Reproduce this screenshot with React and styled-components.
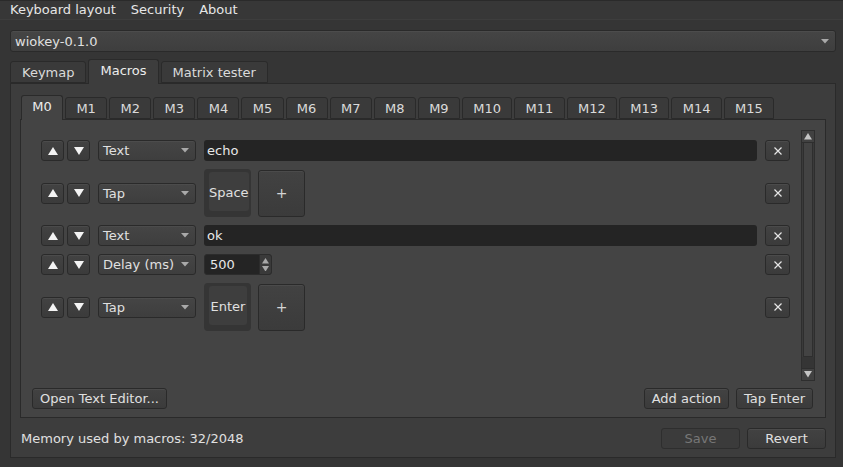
import React from "react"
import styled, { createGlobalStyle } from "styled-components"

const GlobalStyle = createGlobalStyle`
  html, body {
    margin: 0;
    padding: 0;
    background: #353535;
  }

  body {
    font-family: "DejaVu Sans", "Liberation Sans", sans-serif;
    font-size: 13px;
    color: #e0e0e0;
  }

  * {
    box-sizing: border-box;
  }
`

const macros = Array.from({ length: 16 }, (_, i) => `M${i}`)

const actions = [
  { kind: "Text", value: "echo" },
  { kind: "Tap", key: "Space" },
  { kind: "Text", value: "ok" },
  { kind: "Delay (ms)", delay: 500 },
  { kind: "Tap", key: "Enter" },
]

function Triangle({ up, size = 10, color = "#f4f4f4" }) {
  const h = size * 0.8
  return (
    <svg width={size} height={h} viewBox={`0 0 ${size} ${h}`}>
      <polygon
        points={up ? `0,${h} ${size / 2},0 ${size},${h}` : `0,0 ${size},0 ${size / 2},${h}`}
        fill={color}
      />
    </svg>
  )
}

function DropArrow() {
  return (
    <svg width="8" height="5" viewBox="0 0 8 5">
      <polygon points="0,0 8,0 4,4.5" fill="#a9a9a9" />
    </svg>
  )
}

function CloseIcon() {
  return (
    <svg width="8" height="8" viewBox="0 0 8 8">
      <path d="M0.5 0.5 L7.5 7.5 M7.5 0.5 L0.5 7.5" stroke="#e6e6e6" strokeWidth="1.2" />
    </svg>
  )
}

function ActionRow({ action }) {
  return (
    <Row>
      <ArrowButton><Triangle up /></ArrowButton>
      <ArrowButton><Triangle /></ArrowButton>
      <Combo $width={98} $gap={7}>
        <span>{action.kind}</span>
        <DropArrow />
      </Combo>
      {action.value !== undefined && <Field>{action.value}</Field>}
      {action.key && (
        <>
          <KeyCap>
            <KeyFace>{action.key}</KeyFace>
          </KeyCap>
          <PlusButton>+</PlusButton>
          <Spacer />
        </>
      )}
      {action.delay !== undefined && (
        <>
          <SpinBox>
            <span>{action.delay}</span>
            <SpinArrows>
              <Triangle up size={7} color="#a8a8a8" />
              <Triangle size={7} color="#a8a8a8" />
            </SpinArrows>
          </SpinBox>
          <Spacer />
        </>
      )}
      <CloseButton><CloseIcon /></CloseButton>
    </Row>
  )
}

export default function App() {
  return (
    <Window>
      <GlobalStyle />
      <MenuBar>
        <span>Keyboard layout</span>
        <span>Security</span>
        <span>About</span>
      </MenuBar>
      <Body>
        <Combo $gap={0}>
          <span>wiokey-0.1.0</span>
          <DropArrow />
        </Combo>
        <TabBar>
          <Tab $pad={11}>Keymap</Tab>
          <Tab $pad={11} $active $bg="#3d3d3d">Macros</Tab>
          <Tab $pad={11}>Matrix tester</Tab>
        </TabBar>
        <Pane>
          <TabBar $inner>
            {macros.map((m, i) => (
              <Tab key={m} $pad={10.3} $active={i === 0} $bg="#444444">{m}</Tab>
            ))}
          </TabBar>
          <InnerPane>
            <ScrollArea>
              <Actions>
                {actions.map((a, i) => (
                  <ActionRow key={i} action={a} />
                ))}
              </Actions>
              <ScrollBar>
                <ScrollStep><Triangle up size={8} color="#c4c4c4" /></ScrollStep>
                <ScrollHandle />
                <ScrollTrack />
                <ScrollStep><Triangle size={8} color="#c4c4c4" /></ScrollStep>
              </ScrollBar>
            </ScrollArea>
            <ButtonRow>
              <Button>Open Text Editor...</Button>
              <Spacer />
              <Button>Add action</Button>
              <Button>Tap Enter</Button>
            </ButtonRow>
          </InnerPane>
          <Footer>
            <span>Memory used by macros: 32/2048</span>
            <Spacer />
            <Button $wide disabled>Save</Button>
            <Button $wide>Revert</Button>
          </Footer>
        </Pane>
      </Body>
    </Window>
  )
}

const Window = styled.div`
  width: 843px;
  height: 467px;
  overflow: hidden;
  display: flex;
  flex-direction: column;
  background: #353535;
  border-top: 1px solid #2a2a2a;
`

const MenuBar = styled.div`
  height: 19px;
  flex: none;
  display: flex;
  align-items: center;
  gap: 15px;
  padding-left: 10px;
  padding-bottom: 1px;
  background: #373737;
  border-bottom: 1px solid #3d3d3d;
  color: #e6e6e6;
`

const Body = styled.div`
  flex: 1;
  display: flex;
  flex-direction: column;
  padding: 10px 7px 9px 10px;
  min-height: 0;
`

const Combo = styled.div`
  flex: none;
  width: ${p => (p.$width ? `${p.$width}px` : "auto")};
  height: ${p => (p.$width ? "21px" : "22px")};
  margin-right: ${p => p.$gap}px;
  display: flex;
  align-items: center;
  justify-content: space-between;
  padding: 0 6px 0 4px;
  background: linear-gradient(#454545, #3e3e3e);
  border: 1px solid #2a2a2a;
  border-radius: 3px;
  box-shadow: inset 0 1px 0 rgba(255, 255, 255, 0.04);
  white-space: nowrap;
`

const TabBar = styled.div`
  flex: none;
  display: flex;
  align-items: flex-end;
  gap: 2px;
  height: 24px;
  margin-top: ${p => (p.$inner ? "0" : "7px")};
  padding-left: ${p => (p.$inner ? "1px" : "0")};
  position: relative;
  z-index: 1;
`

const Tab = styled.div`
  height: ${p => (p.$active ? "25px" : "22px")};
  margin-bottom: ${p => (p.$active ? "-1px" : "0")};
  padding: 3px ${p => p.$pad}px 0;
  display: flex;
  align-items: flex-start;
  justify-content: center;
  white-space: nowrap;
  border: 1px solid #2a2a2a;
  border-bottom: ${p => (p.$active ? "none" : "1px solid #2a2a2a")};
  border-radius: 3px 3px 0 0;
  background: ${p => (p.$active ? p.$bg : "#3a3a3a")};
  color: ${p => (p.$active ? "#ececec" : "#dadada")};
`

const Pane = styled.div`
  flex: 1;
  min-height: 0;
  display: flex;
  flex-direction: column;
  padding: 11px 9px 8px 9px;
  background: #3d3d3d;
  border: 1px solid #2a2a2a;
`

const InnerPane = styled.div`
  flex: 1;
  min-height: 0;
  display: flex;
  flex-direction: column;
  padding: 10px 9px 8px 9px;
  background: #444444;
  border: 1px solid #2a2a2a;
`

const ScrollArea = styled.div`
  flex: 1;
  min-height: 0;
  display: flex;
`

const Actions = styled.div`
  flex: 1;
  display: flex;
  flex-direction: column;
  gap: 8px;
  padding: 10px 11px 0 11px;
`

const Row = styled.div`
  display: flex;
  align-items: center;
`

const buttonBase = `
  display: flex;
  align-items: center;
  justify-content: center;
  background: linear-gradient(#424242, #3b3b3b);
  border: 1px solid #2a2a2a;
  border-radius: 3px;
  box-shadow: inset 0 1px 0 rgba(255, 255, 255, 0.05);
  color: #e0e0e0;
`

const ArrowButton = styled.div`
  ${buttonBase}
  width: 23px;
  height: 21px;
  margin-right: 3px;

  & + & {
    margin-right: 8px;
  }
`

const Field = styled.div`
  flex: 1;
  height: 21px;
  margin-left: 1px;
  margin-right: 8px;
  display: flex;
  align-items: center;
  padding-left: 3px;
  background: #242424;
  border-radius: 3px;
  color: #e8e8e8;
`

const KeyCap = styled.div`
  width: 47px;
  height: 48px;
  margin-left: 1px;
  margin-right: 7px;
  padding: 3px 4px 6px 5px;
  display: flex;
  background: #353535;
  border-radius: 4px;
`

const KeyFace = styled.div`
  flex: 1;
  display: flex;
  align-items: center;
  justify-content: center;
  padding-top: 1px;
  background: #3e3e3e;
  border-radius: 3px;
  white-space: nowrap;
`

const PlusButton = styled.div`
  ${buttonBase}
  width: 47px;
  height: 47px;
  font-size: 14px;
  color: #d4d4d4;
`

const SpinBox = styled.div`
  width: 68px;
  height: 21px;
  margin-left: 1px;
  display: flex;
  align-items: center;
  justify-content: space-between;
  padding-left: 5px;
  background: #242424;
  border: 1px solid #2c2c2c;
  border-radius: 3px;
  color: #e8e8e8;
`

const SpinArrows = styled.div`
  width: 12px;
  height: 19px;
  display: flex;
  flex-direction: column;
  align-items: center;
  justify-content: center;
  gap: 2px;
  background: #3a3a3a;
  border-left: 1px solid #2c2c2c;
  border-radius: 0 2px 2px 0;
`

const Spacer = styled.div`
  flex: 1;
`

const CloseButton = styled.div`
  ${buttonBase}
  width: 25px;
  height: 21px;
`

const ScrollBar = styled.div`
  flex: none;
  width: 14px;
  margin-right: 1px;
  display: flex;
  flex-direction: column;
  background: #3a3a3a;
  border: 1px solid #2e2e2e;
`

const ScrollStep = styled.div`
  flex: none;
  height: 12px;
  display: flex;
  align-items: center;
  justify-content: center;
  background: #414141;
  border-bottom: 1px solid #2e2e2e;

  &:last-child {
    border-bottom: none;
    border-top: 1px solid #2e2e2e;
  }
`

const ScrollHandle = styled.div`
  flex: 1;
  margin: 0 1px;
  background: #434343;
  border: 1px solid #2e2e2e;
  border-top: none;
`

const ScrollTrack = styled.div`
  flex: none;
  height: 11px;
  background: #353535;
`

const ButtonRow = styled.div`
  flex: none;
  display: flex;
  gap: 7px;
  margin-top: 7px;
  padding-left: 2px;
  padding-right: 3px;
`

const Button = styled.button`
  ${buttonBase}
  height: 21px;
  min-width: ${p => (p.$wide ? "79px" : "0")};
  padding: 0 7px;
  font: inherit;
  white-space: nowrap;

  &:disabled {
    color: #777777;
    background: #3b3b3b;
    border-color: #2e2e2e;
    box-shadow: none;
  }
`

const Footer = styled.div`
  flex: none;
  display: flex;
  align-items: center;
  gap: 7px;
  margin-top: 10px;
  padding-left: 1px;
  height: 21px;
`
